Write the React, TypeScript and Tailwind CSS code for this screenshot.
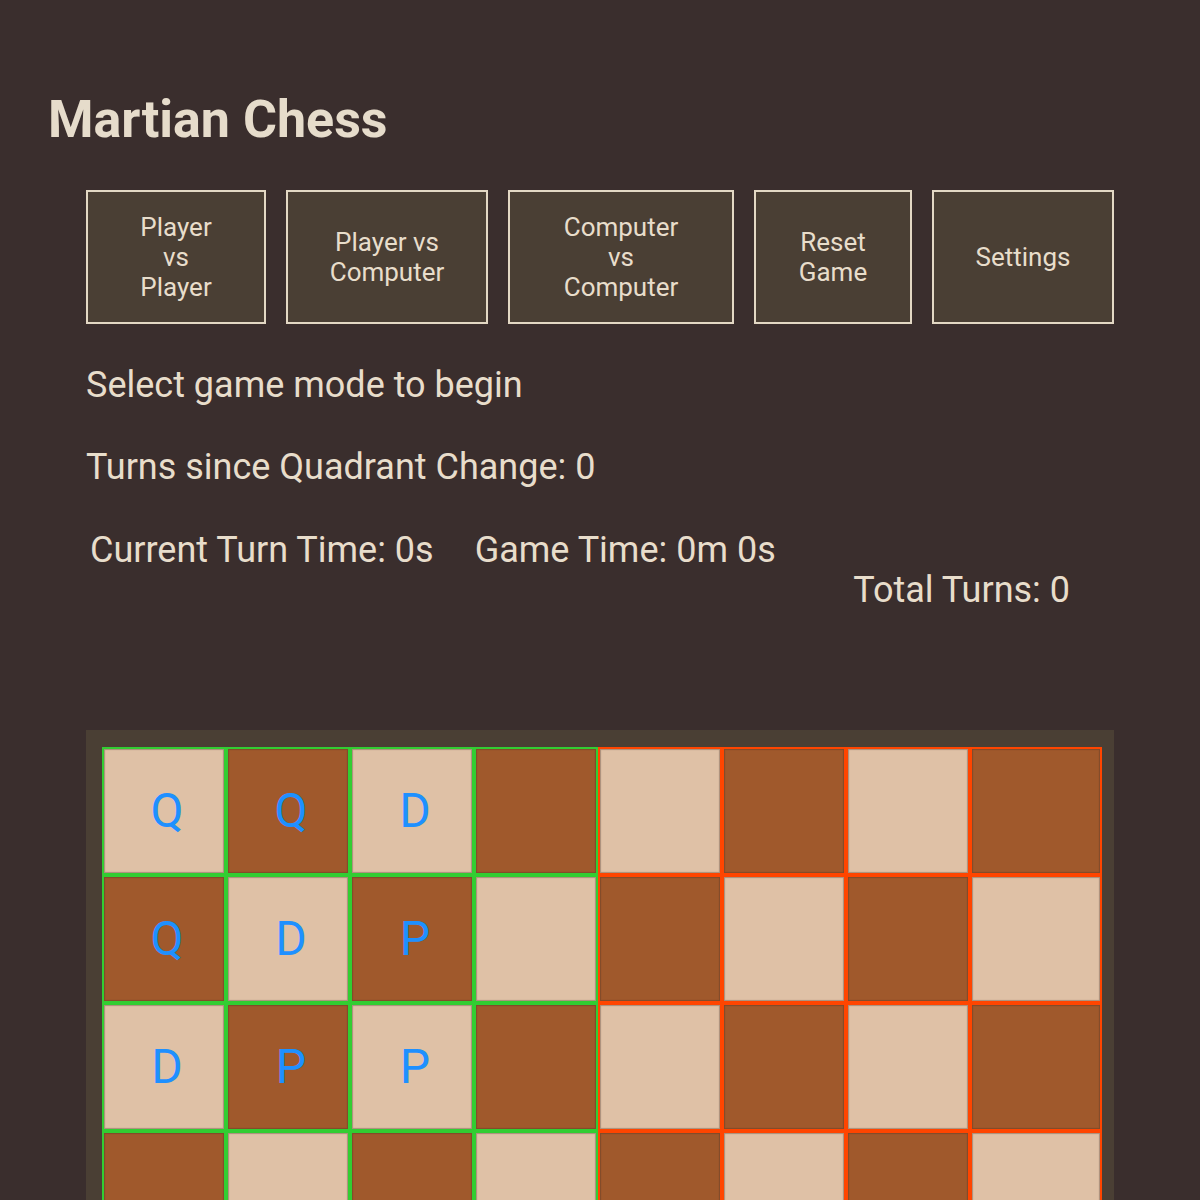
import React from "react"

type Piece = "Q" | "D" | "P" | null

const pieces: Piece[][] = [
  ["Q", "Q", "D", null, null, null, null, null],
  ["Q", "D", "P", null, null, null, null, null],
  ["D", "P", "P", null, null, null, null, null],
  [null, null, null, null, null, null, null, null],
]

const buttons = [
  { label: ["Player", "vs", "Player"], w: "w-[180px]" },
  { label: ["Player vs", "Computer"], w: "w-[202px]" },
  { label: ["Computer", "vs", "Computer"], w: "w-[226px]" },
  { label: ["Reset", "Game"], w: "w-[158px]" },
  { label: ["Settings"], w: "w-[182px]" },
]

function Cell({ row, col, piece }: { row: number; col: number; piece: Piece }) {
  const light = (row + col) % 2 === 0
  const zone = col < 4 ? "border-[#32cd32]" : "border-[#ff4500]"
  return (
    <div className={`h-[128px] border-2 ${zone}`}>
      <div
        className={`flex h-full w-full items-center justify-center pl-[6px] shadow-[inset_0_0_1px_1px_rgba(70,50,40,0.35)] ${
          light ? "bg-[#dfc1a6]" : "bg-[#a0592c]"
        }`}
      >
        {piece && <span className="text-[48px] leading-none text-[#1e90ff]">{piece}</span>}
      </div>
    </div>
  )
}

export default function App() {
  return (
    <div className="min-h-[1200px] bg-[#3a2e2d] px-12 pt-[88px] text-[#e8ddcb] font-['Roboto','Liberation_Sans',sans-serif]">
      <h1 className="text-[52px] font-bold leading-[64px] text-[#e6dccb]">Martian Chess</h1>

      <div className="ml-[38px] w-[1028px]">
        {/* Mode buttons */}
        <div className="mt-[38px] flex justify-between">
          {buttons.map((b) => (
            <button
              key={b.label.join(" ")}
              className={`${b.w} flex h-[134px] flex-col items-center justify-center border-2 border-[#e3d8c4] bg-[#4a3f34] text-[26px] leading-[30px] text-[#e8ddcb]`}
            >
              {b.label.map((l) => (
                <span key={l}>{l}</span>
              ))}
            </button>
          ))}
        </div>

        {/* Status */}
        <p className="mt-[39px] text-[36px] leading-[44px]">Select game mode to begin</p>
        <p className="mt-[38px] text-[36px] leading-[44px]">Turns since Quadrant Change: 0</p>

        <div className="mt-[41px] flex gap-[41px] pl-1 text-[36px] leading-[40px]">
          <span>Current Turn Time: 0s</span>
          <span>Game Time: 0m 0s</span>
        </div>
        <div className="flex justify-end pr-11 text-[36px] leading-[40px]">
          <span>Total Turns: 0</span>
        </div>

        {/* Board */}
        <div className="mt-[120px] bg-[#4a3f34] pl-4 pt-[17px] pb-4">
          <div className="grid grid-cols-[repeat(7,124px)_132px]">
            {pieces.map((r, ri) =>
              r.map((p, ci) => <Cell key={`${ri}-${ci}`} row={ri} col={ci} piece={p} />)
            )}
          </div>
        </div>
      </div>
    </div>
  )
}
